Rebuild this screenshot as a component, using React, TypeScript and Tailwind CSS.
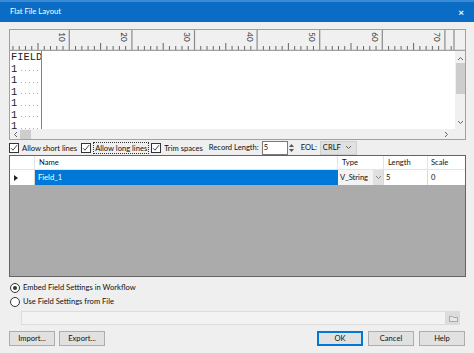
import React from "react";

const ui = "font-['Segoe_UI','Lato','Noto_Sans',sans-serif]";

// ruler geometry, in svg coords (svg starts at x=10)
const CH = 6.26;

function Ruler() {
  const ticks = [];
  for (let i = 1; i <= 71; i++) {
    const x = -3.3 + CH * i;
    if (i % 10 === 0) {
      ticks.push(<line key={i} x1={x} y1={0} x2={x} y2={20} stroke="#8a8a8a" strokeWidth="1.2" />);
      ticks.push(
        <text
          key={"n" + i}
          transform={`translate(${x - 7.6} 7) rotate(90)`}
          textAnchor="middle"
          dominantBaseline="central"
          fontSize="8"
          fill="#333"
          fontFamily="Lato, sans-serif"
        >
          {i}
        </text>
      );
    } else {
      const y1 = i % 5 === 0 ? 13 : 16;
      ticks.push(<line key={i} x1={x} y1={y1} x2={x} y2={20} stroke="#555" strokeWidth="0.9" />);
    }
  }
  return (
    <svg width="455" height="21" className="block">
      <rect x="0" y="0" width="455" height="21" fill="#f0f0f0" />
      {ticks}
      <line x1="444" y1="0" x2="444" y2="20" stroke="#8a8a8a" strokeWidth="1.2" />
      <line x1="0" y1="20.5" x2="455" y2="20.5" stroke="#a0a0a0" strokeWidth="1.5" />
    </svg>
  );
}

function Check({ label, focus }: { label: string; focus?: boolean }) {
  return (
    <div className="flex items-center gap-[2px]">
      <span className="w-[10px] h-[10px] border border-[#333] bg-white flex items-center justify-center">
        <svg width="8" height="8" viewBox="0 0 8 8">
          <path d="M1 4.2l2 2 4-5" fill="none" stroke="#333" strokeWidth="0.9" />
        </svg>
      </span>
      <span
        className={
          focus
            ? "border border-dotted border-[#333] px-[1px] leading-[10px] h-[12px] flex items-center"
            : "px-[1px] leading-[10px]"
        }
      >
        {label}
      </span>
    </div>
  );
}

function Radio({ label, on }: { label: string; on?: boolean }) {
  return (
    <div className="h-[14px] flex items-center gap-[3px] pl-[1px]">
      <span className="w-[10px] h-[10px] rounded-full border border-[#333] bg-white flex items-center justify-center">
        {on && <span className="w-[4px] h-[4px] rounded-full bg-[#333]" />}
      </span>
      <span>{label}</span>
    </div>
  );
}

function Btn({ label, def }: { label: string; def?: boolean }) {
  return (
    <div
      className={
        "w-[46px] h-[15px] flex items-center justify-center bg-[#e1e1e1] border " +
        (def ? "border-[#0078d7] shadow-[inset_0_0_0_1px_#0078d7]" : "border-[#adadad]")
      }
    >
      {label}
    </div>
  );
}

const Chevron = ({ c = "#555" }: { c?: string }) => (
  <svg width="7" height="5" viewBox="0 0 7 5">
    <path d="M1 1l2.5 2.5L6 1" fill="none" stroke={c} strokeWidth="0.9" />
  </svg>
);

export default function App() {
  const lines = ["FIELD", "1", "1", "1", "1", "1", "1"];
  return (
    <div className={`w-[474px] h-[353px] bg-[#efefef] flex flex-col text-[7.6px] text-[#111] overflow-hidden ${ui}`}>
      {/* title bar */}
      <div className="h-[22px] bg-[#0a6cc4] border-t-2 border-[#3a8ad6] flex items-center justify-between pl-[10px] pr-[10px] text-white">
        <span>Flat File Layout</span>
        <span className="text-[10px] font-bold leading-none">×</span>
      </div>

      <div className="flex flex-col pl-[9px] pr-[8px]">
        {/* editor */}
        <div className="mt-[7px] h-[111px] border border-[#a0a0a0] flex flex-col">
          <Ruler />
          <div className="h-[78px] flex">
            <div className="relative flex-1 bg-white pl-[1px] pt-[1px] font-['Liberation_Mono',monospace] text-[10.4px] leading-[11.5px] text-[#222] overflow-hidden">
              {lines.map((l, i) => (
                <div key={i} className="flex items-center h-[11.5px]">
                  <span>{l}</span>
                  {l === "1" && (
                    <span className="ml-[4px] mt-[3px] w-[21px] h-[1px] bg-[repeating-linear-gradient(90deg,#b0b0b0_0_1px,transparent_1px_4px)]" />
                  )}
                </div>
              ))}
              <div className="absolute left-[31px] top-0 bottom-0 w-px bg-[#e05a5a]" />
            </div>
            <div className="w-[10px] bg-[#f0f0f0] flex flex-col items-center">
              <svg width="7" height="5" viewBox="0 0 7 5" className="mt-[5px]">
                <path d="M1 4l2.5-2.5L6 4" fill="none" stroke="#555" strokeWidth="0.9" />
              </svg>
              <div className="mt-[2px] w-[9px] h-[31px] bg-[#cdcdcd]" />
              <div className="flex-1" />
              <div className="mb-[4px]">
                <Chevron />
              </div>
            </div>
          </div>
          <div className="h-[10px] flex items-center bg-[#f0f0f0]">
            <svg width="5" height="7" viewBox="0 0 5 7" className="ml-[3px]">
              <path d="M4 1L1.5 3.5L4 6" fill="none" stroke="#555" strokeWidth="0.9" />
            </svg>
            <div className="ml-[2px] w-[11px] h-[9px] bg-[#cdcdcd]" />
            <div className="flex-1" />
            <svg width="5" height="7" viewBox="0 0 5 7" className="mr-[16px]">
              <path d="M1 1l2.5 2.5L1 6" fill="none" stroke="#555" strokeWidth="0.9" />
            </svg>
          </div>
        </div>

        {/* options */}
        <div className="h-[15px] flex items-center">
          <Check label="Allow short lines" />
          <div className="w-[3px]" />
          <Check label="Allow long lines" focus />
          <div className="w-[2px]" />
          <Check label="Trim spaces" />
          <span className="ml-[5px]">Record Length:</span>
          <div className="ml-[3px] w-[26px] h-[14px] bg-white border border-[#7a7a7a] flex items-center pl-[1px]">5</div>
          <div className="w-[8px] h-[14px] flex flex-col items-center justify-center gap-[2px]">
            <svg width="5" height="3" viewBox="0 0 5 3"><path d="M0 3L2.5 0L5 3z" fill="#555" /></svg>
            <svg width="5" height="3" viewBox="0 0 5 3"><path d="M0 0L2.5 3L5 0z" fill="#555" /></svg>
          </div>
          <span className="ml-[5px]">EOL:</span>
          <div className="ml-[3px] w-[37px] h-[14px] bg-[#e1e1e1] border border-[#cfcfcf] flex items-center justify-between pl-[2px] pr-[4px]">
            <span>CRLF</span>
            <Chevron />
          </div>
        </div>

        {/* grid */}
        <div className="h-[122px] border border-[#646464] bg-[#ababab] flex flex-col">
          <div className="h-[14px] bg-white flex border-b border-[#e4e4e4]">
            <div className="w-[25px] border-r border-[#e4e4e4]" />
            <div className="w-[303px] pl-[4px] flex items-center border-r border-[#e4e4e4]">Name</div>
            <div className="w-[46px] pl-[4px] flex items-center border-r border-[#e4e4e4]">Type</div>
            <div className="w-[44px] pl-[4px] flex items-center border-r border-[#e4e4e4]">Length</div>
            <div className="flex-1 pl-[3px] flex items-center">Scale</div>
          </div>
          <div className="h-[15px] bg-white flex">
            <div className="w-[25px] flex items-center pl-[4px] border-r border-[#d8d8d8]">
              <svg width="4" height="6" viewBox="0 0 4 6"><path d="M0 0L4 3L0 6z" fill="#222" /></svg>
            </div>
            <div className="w-[303px] pl-[3px] flex items-center bg-[#0078d7] text-white">Field_1</div>
            <div className="w-[46px] flex items-center bg-[#f3f3f3] border-r border-[#d8d8d8]">
              <span className="flex-1 pl-[2px]">V_String</span>
              <span className="w-[10px] h-full bg-[#e0e0e0] flex items-center justify-center">
                <Chevron c="#777" />
              </span>
            </div>
            <div className="w-[44px] pl-[2px] flex items-center border-r border-[#d8d8d8]">5</div>
            <div className="flex-1 pl-[3px] flex items-center">0</div>
          </div>
        </div>

        {/* settings source */}
        <div className="mt-[4px] flex flex-col">
          <Radio label="Embed Field Settings in Workflow" on />
          <Radio label="Use Field Settings from File" />
        </div>
        <div className="mt-[2px] ml-[12px] h-[14px] flex">
          <div className="w-[425px] bg-[#f3f3f3] border border-[#dcdcdc]" />
          <div className="w-[14px] bg-[#dcdcdc] flex items-center justify-center">
            <svg width="9" height="7" viewBox="0 0 9 7">
              <path d="M0.5 1.5h3l1 1h4v4h-8z" fill="#e8e8e8" stroke="#9a9a9a" strokeWidth="0.8" />
            </svg>
          </div>
        </div>

        {/* buttons */}
        <div className="mt-[6px] flex items-center">
          <Btn label="Import..." />
          <div className="w-[4px]" />
          <Btn label="Export..." />
          <div className="flex-1" />
          <Btn label="OK" def />
          <div className="w-[5px]" />
          <Btn label="Cancel" />
          <div className="w-[5px]" />
          <Btn label="Help" />
          <div className="w-[1px]" />
        </div>
      </div>
    </div>
  );
}
